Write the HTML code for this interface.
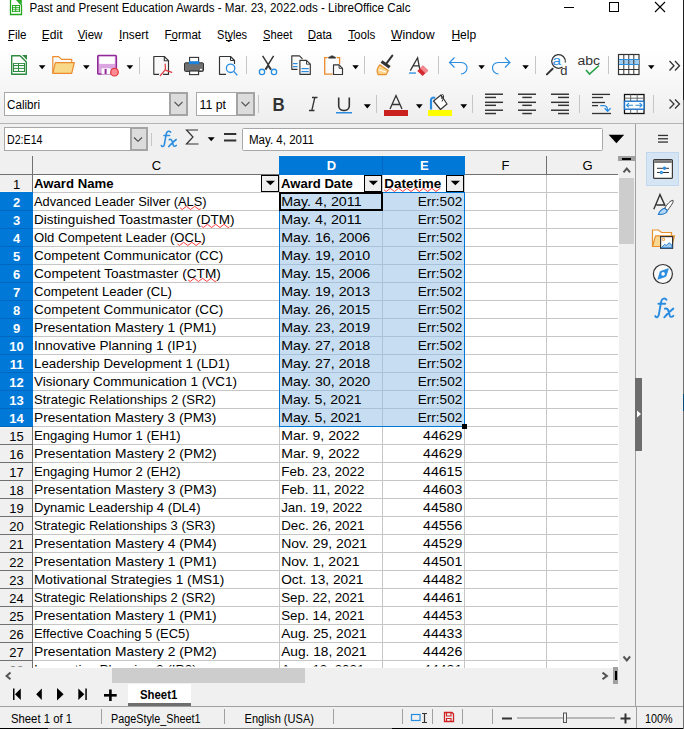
<!DOCTYPE html>
<html><head><meta charset="utf-8"><title>LibreOffice Calc</title>
<style>
html,body{margin:0;padding:0;width:684px;height:729px;overflow:hidden;background:#f0f0f0;}
svg{display:block;font-family:"Liberation Sans", sans-serif;}
</style></head><body>
<svg width="684" height="729" viewBox="0 0 684 729" shape-rendering="auto">
<rect x="0" y="0" width="684" height="729" fill="#f0f0f0"/>
<rect x="0" y="0" width="684" height="48" fill="#ffffff"/>
<defs><linearGradient id="tb" x1="0" y1="0" x2="0" y2="1"><stop offset="0" stop-color="#ffffff"/><stop offset="1" stop-color="#eeeeee"/></linearGradient></defs>
<rect x="0" y="48" width="684" height="75" fill="url(#tb)"/>
<rect x="0" y="123" width="684" height="1" fill="#b4b4b4"/>
<g id="titleicon"><path d="M10.5 -1 V14.5 H21.5 V5 L16 -1" fill="none" stroke="#22a61c" stroke-width="1.3"/><path d="M16.5 -1 L21.8 4.3 V-1 Z" fill="#22a61c"/><rect x="12" y="5" width="8" height="7" fill="#22a61c"/><rect x="13" y="6" width="2.2" height="1.2" fill="#fff"/><rect x="16.2" y="6" width="2.8" height="1.2" fill="#fff"/><rect x="13" y="8.2" width="2.2" height="1.2" fill="#fff"/><rect x="16.2" y="8.2" width="2.8" height="1.2" fill="#fff"/><rect x="13" y="10.2" width="2.2" height="1" fill="#fff"/><rect x="16.2" y="10.2" width="2.8" height="1" fill="#fff"/></g>
<text x="29.5" y="12" font-size="12" fill="#000" textLength="381" lengthAdjust="spacingAndGlyphs">Past and Present Education Awards - Mar. 23, 2022.ods - LibreOffice Calc</text>
<rect x="564" y="7" width="10" height="1" fill="#000"/>
<rect x="609.5" y="2.5" width="9" height="9" fill="none" stroke="#000" stroke-width="1"/>
<path d="M655 2 L665 12 M665 2 L655 12" stroke="#000" stroke-width="1.1"/>
<text x="7.8999999999999995" y="39" font-size="12" fill="#000" textLength="18.6" lengthAdjust="spacingAndGlyphs">File</text>
<text x="41.800000000000004" y="39" font-size="12" fill="#000" textLength="20.8" lengthAdjust="spacingAndGlyphs">Edit</text>
<text x="77.7" y="39" font-size="12" fill="#000" textLength="24.6" lengthAdjust="spacingAndGlyphs">View</text>
<text x="118.9" y="39" font-size="12" fill="#000" textLength="29.6" lengthAdjust="spacingAndGlyphs">Insert</text>
<text x="164.39999999999998" y="39" font-size="12" fill="#000" textLength="36.7" lengthAdjust="spacingAndGlyphs">Format</text>
<text x="217.1" y="39" font-size="12" fill="#000" textLength="30.0" lengthAdjust="spacingAndGlyphs">Styles</text>
<text x="263.09999999999997" y="39" font-size="12" fill="#000" textLength="29.2" lengthAdjust="spacingAndGlyphs">Sheet</text>
<text x="307.7" y="39" font-size="12" fill="#000" textLength="24.3" lengthAdjust="spacingAndGlyphs">Data</text>
<text x="348.2" y="39" font-size="12" fill="#000" textLength="27.1" lengthAdjust="spacingAndGlyphs">Tools</text>
<text x="390.9" y="39" font-size="12" fill="#000" textLength="43.6" lengthAdjust="spacingAndGlyphs">Window</text>
<text x="451.4" y="39" font-size="12" fill="#000" textLength="24.8" lengthAdjust="spacingAndGlyphs">Help</text>
<rect x="8" y="40" width="5" height="1" fill="#000"/>
<rect x="42" y="40" width="6" height="1" fill="#000"/>
<rect x="78" y="40" width="7" height="1" fill="#000"/>
<rect x="119" y="40" width="3" height="1" fill="#000"/>
<rect x="170" y="40" width="7" height="1" fill="#000"/>
<rect x="226" y="40" width="6" height="1" fill="#000"/>
<rect x="263" y="40" width="7" height="1" fill="#000"/>
<rect x="308" y="40" width="8" height="1" fill="#000"/>
<rect x="348" y="40" width="7" height="1" fill="#000"/>
<rect x="391" y="40" width="10" height="1" fill="#000"/>
<rect x="452" y="40" width="8" height="1" fill="#000"/>
<path d="M11.7 55.7 H20 L26.3 62 V74.3 H11.7 Z" fill="#fff" stroke="#2e8b40" stroke-width="1.4" stroke-linejoin="round"/>
<path d="M22 55 H27 V60 Z" fill="#2e8b40"/>
<rect x="13" y="63" width="12" height="9" fill="#2e8b40"/>
<rect x="14" y="63.9" width="4" height="1.1" fill="#fff"/><rect x="19" y="63.9" width="5" height="1.1" fill="#fff"/>
<rect x="14" y="66.1" width="4" height="1.8" fill="#fff"/><rect x="19" y="66.1" width="5" height="1.8" fill="#fff"/>
<rect x="14" y="68.9" width="4" height="2.0" fill="#fff"/><rect x="19" y="68.9" width="5" height="2.0" fill="#fff"/>
<path d="M38.8 65.2 H45.5 L42.15 69.3 Z" fill="#000"/>
<path d="M52.8 73.3 V56.6 H58.6 L61.6 59.4 H71.7 V62.6" fill="#fcfcfc" stroke="#ec8a2c" stroke-width="1.2" stroke-linejoin="round"/>
<path d="M52.8 73.3 L55.3 62.6 H74.3 L71.7 73.3 Z" fill="#f8d98a" stroke="#ec8a2c" stroke-width="1.2" stroke-linejoin="round"/>
<path d="M83 65.2 H89.7 L86.35 69.3 Z" fill="#000"/>
<rect x="97.75" y="55.5" width="18.6" height="18.6" rx="0.8" fill="#dba6df" stroke="#8f2a97" stroke-width="1.5"/>
<rect x="99.3" y="56.6" width="15.5" height="7.3" fill="#fff"/>
<rect x="101.6" y="68.4" width="9" height="6" fill="#fff"/><rect x="104.6" y="69" width="2" height="5" fill="#8f2a97"/>
<circle cx="114.5" cy="72.2" r="3.8" fill="#ff8a94" stroke="#e03a3a" stroke-width="1.2"/>
<path d="M126.5 65.2 H133.2 L129.85 69.3 Z" fill="#000"/>
<rect x="139" y="57" width="1" height="17" fill="#c6c6c6"/>
<path d="M153.8 56.5 H164.3 L168.5 60.7 V74.3 H153.8 Z" fill="#f9f9f9" stroke="#333" stroke-width="1.15" stroke-linejoin="round"/>
<path d="M164.3 56.5 V60.8 H168.5" fill="none" stroke="#333" stroke-width="1.1"/>
<rect x="159" y="73.5" width="4" height="1.6" fill="#fff"/>
<path d="M165.1 64.2 C165.4 66.5 165.8 68.5 165.2 70 L160.3 75.6 M165.2 70 C167.3 71 169.4 71.4 171.7 72.3" fill="none" stroke="#e23a3f" stroke-width="1.25" stroke-linecap="round"/>
<rect x="189.6" y="57.4" width="9" height="6" fill="#fff" stroke="#333" stroke-width="1.1"/>
<rect x="184.5" y="62.8" width="19" height="8.6" rx="1" fill="#707070" stroke="#333" stroke-width="1"/>
<rect x="189" y="61.2" width="10.2" height="3" fill="#1a80d8"/>
<rect x="189.6" y="71" width="9" height="3.6" fill="#fff" stroke="#333" stroke-width="1.1"/>
<rect x="200" y="68.9" width="2" height="1.3" fill="#fff"/>
<path d="M219.5 56.5 H230.5 L234.5 60.5 V64 M226 74.3 H219.5 V56.5" fill="#f9f9f9" stroke="#333" stroke-width="1.15" stroke-linejoin="round"/>
<path d="M230.5 56.5 V60.5 H234.5" fill="none" stroke="#333" stroke-width="1"/>
<circle cx="230.6" cy="68.3" r="4.2" fill="#fff" stroke="#2b8de0" stroke-width="1.3"/>
<path d="M233.7 71.4 L237.3 75.2" stroke="#2b8de0" stroke-width="1.3"/>
<rect x="246" y="56" width="1" height="18" fill="#c6c6c6"/>
<path d="M262.6 55.8 L268.2 64.6 L273.6 55.8" fill="none" stroke="#333" stroke-width="1.45" stroke-linejoin="miter"/>
<path d="M265.4 69.6 L268.2 65.4 L271 69.6" fill="none" stroke="#333" stroke-width="1.9"/>
<circle cx="262" cy="71.9" r="2.65" fill="#fff" stroke="#2b8de0" stroke-width="1.3"/>
<circle cx="274" cy="71.9" r="2.65" fill="#fff" stroke="#2b8de0" stroke-width="1.3"/>
<path d="M297.5 69.3 H291.8 V55.8 H299.4 L302.5 58.9" fill="#fafafa" stroke="#333" stroke-width="1.15" stroke-linejoin="round"/>
<rect x="293" y="63" width="4.6" height="1.2" fill="#2b8de0"/>
<rect x="293" y="66" width="4.6" height="1.2" fill="#2b8de0"/>
<path d="M299.9 60.4 H306.5 L310.3 64.2 V74.3 H299.9 Z" fill="#fafafa" stroke="#333" stroke-width="1.15" stroke-linejoin="round"/>
<path d="M306.5 60.4 V64.2 H310.3" fill="none" stroke="#333" stroke-width="0.9"/>
<rect x="301.4" y="68" width="7.4" height="1.2" fill="#2b8de0"/>
<rect x="301.4" y="71" width="7.4" height="1.2" fill="#2b8de0"/>
<path d="M327.5 57.6 H324.7 V74.1 H332.5 M336.8 57.6 H339.6 V64" fill="none" stroke="#ec8a2c" stroke-width="1.3"/>
<path d="M328.3 58.4 H335.8 V57.6 C335.8 56.6 334.8 56.4 333.8 56.4 C333.6 55.2 330.6 55.2 330.4 56.4 C329.4 56.4 328.3 56.6 328.3 57.6 Z" fill="#333"/>
<path d="M333.5 64.9 H339.1 L342.5 68.3 V74.5 H333.5 Z" fill="#fafafa" stroke="#333" stroke-width="1.15" stroke-linejoin="round"/>
<path d="M339.1 64.9 V68.3 H342.5" fill="none" stroke="#333" stroke-width="0.9"/>
<path d="M352.3 65.2 H358.8 L355.55 69.3 Z" fill="#000"/>
<rect x="364" y="56" width="1" height="18" fill="#c6c6c6"/>
<path d="M392.3 55.6 L386.3 63.6" stroke="#333" stroke-width="2" stroke-linecap="round"/>
<path d="M380.6 62.8 L388.8 68.6 L390.6 66 L382.4 60.3 Z" fill="#333"/>
<path d="M379.8 64.8 L388.2 70.6 L386 74.6 H378.2 C376.6 72 377 68 379.8 64.8 Z" fill="#fbd38b" stroke="#e8912c" stroke-width="1.2" stroke-linejoin="round"/>
<path d="M378.6 69.8 L386.6 72.2" stroke="#fff" stroke-width="1"/>
<path d="M410.3 70.6 L417.6 57.8 L420 70.6 M413.2 65.8 H419" fill="none" stroke="#333" stroke-width="1.3"/>
<rect x="409" y="72.4" width="7" height="1.3" fill="#2b8de0"/>
<path d="M417.3 71 L422.6 76 L428.2 70.6 L422.9 65.5 Z" fill="#d42a2f"/>
<path d="M420.1 68.2 L422.9 65.5 L428.2 70.6 L425.4 73.3 Z" fill="#f28a90"/>
<rect x="438" y="56" width="1" height="18" fill="#c6c6c6"/>
<path d="M449.5 62.5 H461 C470 62.5 468 74 461 74" fill="none" stroke="#2b8de0" stroke-width="1.15"/>
<path d="M454.5 57.5 L449.5 62.5 L454.5 67.5" fill="none" stroke="#2b8de0" stroke-width="1.15"/>
<path d="M478.3 65.2 H484.8 L481.55 69.3 Z" fill="#000"/>
<path d="M510 62.5 H498.5 C489.5 62.5 491.5 74 498.5 74" fill="none" stroke="#2b8de0" stroke-width="1.15"/>
<path d="M505 57.5 L510 62.5 L505 67.5" fill="none" stroke="#2b8de0" stroke-width="1.15"/>
<path d="M522.3 65.2 H528.8 L525.55 69.3 Z" fill="#000"/>
<rect x="535" y="56" width="1" height="18" fill="#c6c6c6"/>
<path d="M562.5 67 A6.8 6.8 0 1 1 565.3 62.5" fill="none" stroke="#333" stroke-width="1.2"/>
<path d="M546.9 74.4 L552.6 68.8" stroke="#333" stroke-width="2" stroke-linecap="round"/>
<text x="552.6" y="65.3" font-size="12.5" fill="#2b8de0" textLength="8.6" lengthAdjust="spacingAndGlyphs">a</text>
<text x="560.2" y="75" font-size="12.5" fill="#333" textLength="7.2" lengthAdjust="spacingAndGlyphs">d</text>
<text x="577.5" y="64.5" font-size="12.5" fill="#333" textLength="22.5" lengthAdjust="spacingAndGlyphs">abc</text>
<path d="M586 70 L589.5 74 L599 65.5" fill="none" stroke="#26a148" stroke-width="1.6"/>
<rect x="608" y="56" width="1" height="18" fill="#c6c6c6"/>
<rect x="618.5" y="54.5" width="20.5" height="20" fill="#fff" stroke="#333" stroke-width="1.2"/>
<rect x="619" y="59.5" width="20" height="5" fill="#9fcbef"/>
<path d="M619 59.5 H639 M619 64.5 H639 M619 69.5 H639 M623.8 54.5 V74.5 M628.8 54.5 V74.5 M633.8 54.5 V74.5" stroke="#333" stroke-width="1"/>
<path d="M619 59.5 H639 M619 64.5 H639" stroke="#2b8de0" stroke-width="1.2"/>
<path d="M648 65.2 H654.5 L651.25 69.3 Z" fill="#000"/>
<path d="M669.5 61 L674 65.7 L669.5 70.5 M675 61 L679.5 65.7 L675 70.5" fill="none" stroke="#333" stroke-width="1.3"/>
<rect x="4.5" y="92.5" width="183" height="23" fill="#fff" stroke="#a8a8a8" stroke-width="1"/>
<rect x="170" y="93" width="17" height="22" fill="#dcdcdc"/>
<path d="M169.5 93 V115" stroke="#a8a8a8" stroke-width="1"/>
<rect x="170" y="93" width="17" height="22" fill="none" stroke="#a4a4a4" stroke-width="2"/>
<path d="M174.5 102.0 L178.5 106.0 L182.5 102.0" fill="none" stroke="#555" stroke-width="1.1"/>
<text x="7" y="108.5" font-size="12.5" fill="#000" textLength="33" lengthAdjust="spacingAndGlyphs">Calibri</text>
<rect x="196.5" y="92.5" width="58" height="23" fill="#fff" stroke="#a8a8a8" stroke-width="1"/>
<rect x="237" y="93" width="17" height="22" fill="#dcdcdc"/>
<path d="M236.5 93 V115" stroke="#a8a8a8" stroke-width="1"/>
<rect x="237" y="93" width="17" height="22" fill="none" stroke="#a4a4a4" stroke-width="2"/>
<path d="M241.5 102.0 L245.5 106.0 L249.5 102.0" fill="none" stroke="#555" stroke-width="1.1"/>
<text x="199.5" y="108.5" font-size="12.5" fill="#000" textLength="26.5" lengthAdjust="spacingAndGlyphs">11 pt</text>
<rect x="258" y="95" width="1" height="18" fill="#c6c6c6"/>
<text x="272.6" y="110.7" font-size="18.5" font-weight="bold" fill="#333" textLength="12.2" lengthAdjust="spacingAndGlyphs">B</text>
<path d="M312 97.5 H317.5 M309 110.5 H314.5 M314.8 97.5 L311.8 110.5" stroke="#333" stroke-width="1.3" fill="none"/>
<path d="M338.7 97.5 V106 C338.7 112 349.3 112 349.3 106 V97.5" fill="none" stroke="#333" stroke-width="1.6"/>
<rect x="336" y="112" width="16" height="1.5" fill="#2b8de0"/>
<path d="M363.8 104.3 H370.8 L367.3 108.5 Z" fill="#000"/>
<rect x="376" y="95" width="1" height="18" fill="#c6c6c6"/>
<path d="M390 109 L396 95.5 L402 109 M392.2 104.5 H399.8" fill="none" stroke="#333" stroke-width="1.3"/>
<rect x="384" y="110" width="24" height="6" fill="#c9211e"/>
<path d="M416 104.3 H422.7 L419.35 108.5 Z" fill="#000"/>
<path d="M433.5 101 L441 95 L447 104 L440.5 109.5 Z" fill="#fff" stroke="#333" stroke-width="1.2" stroke-linejoin="round"/>
<path d="M431 109.5 V100 C431 98 433 97 435 98" fill="none" stroke="#2b8de0" stroke-width="2.2"/>
<path d="M442 101.5 C444 98 444 94.5 442.5 94.5 C441 94.5 441 97 442 99" fill="none" stroke="#333" stroke-width="1"/>
<rect x="428" y="110" width="24" height="6" fill="#ffff00"/>
<path d="M460.4 104.3 H467.09999999999997 L463.75 108.5 Z" fill="#000"/>
<rect x="472" y="95" width="1" height="18" fill="#c6c6c6"/>
<rect x="485" y="93.5" width="18" height="1.45" fill="#333"/>
<rect x="485" y="96.7" width="11" height="1.45" fill="#333"/>
<rect x="485" y="101.6" width="18" height="1.45" fill="#333"/>
<rect x="485" y="104.6" width="11" height="1.45" fill="#333"/>
<rect x="485" y="109.5" width="18" height="1.45" fill="#333"/>
<rect x="485" y="112.8" width="11" height="1.45" fill="#333"/>
<rect x="518" y="93.5" width="18" height="1.45" fill="#333"/>
<rect x="522.3" y="96.7" width="9.5" height="1.45" fill="#333"/>
<rect x="518" y="101.6" width="18" height="1.45" fill="#333"/>
<rect x="522.3" y="104.6" width="9.5" height="1.45" fill="#333"/>
<rect x="518" y="109.5" width="18" height="1.45" fill="#333"/>
<rect x="522.3" y="112.8" width="9.5" height="1.45" fill="#333"/>
<rect x="551" y="93.5" width="18" height="1.45" fill="#333"/>
<rect x="558" y="96.7" width="11" height="1.45" fill="#333"/>
<rect x="551" y="101.6" width="18" height="1.45" fill="#333"/>
<rect x="558" y="104.6" width="11" height="1.45" fill="#333"/>
<rect x="551" y="109.5" width="18" height="1.45" fill="#333"/>
<rect x="558" y="112.8" width="11" height="1.45" fill="#333"/>
<rect x="579" y="95" width="1" height="18" fill="#c6c6c6"/>
<rect x="592" y="93.75" width="18" height="1.3" fill="#333"/>
<rect x="592" y="96.85" width="11" height="1.3" fill="#333"/>
<rect x="592" y="101.85" width="13" height="1.3" fill="#333"/>
<rect x="592" y="104.94999999999999" width="6" height="1.3" fill="#333"/>
<rect x="592" y="112.85" width="19" height="1.3" fill="#333"/>
<path d="M600.3 105.6 H604 C606.5 105.6 607.6 107.5 607.6 111" fill="none" stroke="#2b8de0" stroke-width="1.3"/>
<path d="M604.6 108.3 L607.6 111.3 L610.6 108.3" fill="none" stroke="#2b8de0" stroke-width="1.3"/>
<rect x="624.5" y="94.5" width="19.5" height="19" fill="#fff" stroke="#111" stroke-width="1.3"/>
<path d="M624.5 98.2 H644 M630.7 94.5 V101 M637.2 94.5 V101 M630.7 109 V113.5 M637.2 109 V113.5" stroke="#666" stroke-width="1"/>
<rect x="624.5" y="101.2" width="19.5" height="8" fill="#fff" stroke="#1a73c8" stroke-width="1.4"/>
<path d="M626.5 105.2 H633 M629 103 L626.6 105.2 L629 107.4 M635.5 105.2 H642 M639.6 103 L642 105.2 L639.6 107.4" fill="none" stroke="#2b8de0" stroke-width="1.1"/>
<rect x="653" y="95" width="1" height="18" fill="#c6c6c6"/>
<path d="M669.5 99.5 L674 104 L669.5 108.5 M675 99.5 L679.5 104 L675 108.5" fill="none" stroke="#333" stroke-width="1.3"/>
<rect x="4.5" y="127.5" width="143" height="23" fill="#fff" stroke="#a8a8a8" stroke-width="1"/>
<rect x="130.5" y="127.5" width="17" height="23" fill="#dcdcdc" stroke="#a8a8a8" stroke-width="1"/>
<rect x="131" y="128" width="16" height="22" fill="none" stroke="#a4a4a4" stroke-width="2"/>
<path d="M134 137.5 L138 141.3 L142 137.5" fill="none" stroke="#444" stroke-width="1.1"/>
<text x="7" y="144" font-size="12.5" fill="#000" textLength="35.5" lengthAdjust="spacingAndGlyphs">D2:E14</text>
<rect x="151" y="133" width="1" height="13" fill="#c6c6c6"/>
<path d="M170.6 132.2 C169.6 130.6 166.8 130.8 166.2 134 L164.3 144.6 C163.8 147 162 147 161.4 145.6 M164 135.5 H169.6 M169.3 139.6 C170.8 139 171.8 139.8 172.2 141.5 L173.3 145.2 C173.8 146.6 175.2 146.6 176.2 145.4 M176.2 139.5 C173.5 141.5 171 144 168.8 146.6" fill="none" stroke="#2b8de0" stroke-width="1.6" stroke-linecap="round"/>
<path d="M198 130 H186.5 L193 137 L186.5 144 H198.5" fill="none" stroke="#333" stroke-width="1.2"/>
<path d="M207.7 137.2 H214.7 L211.2 141.29999999999998 Z" fill="#000"/>
<rect x="224" y="133" width="12.3" height="2" fill="#333"/>
<rect x="224" y="139.5" width="12.3" height="2" fill="#333"/>
<rect x="242.5" y="128.5" width="360" height="22" rx="1" fill="#fff" stroke="#a8a8a8" stroke-width="1"/>
<text x="249" y="143.6" font-size="12.5" fill="#000" textLength="65" lengthAdjust="spacingAndGlyphs">May. 4, 2011</text>
<rect x="603" y="124" width="32" height="31" fill="#f0f0f0"/>
<path d="M608.6 134.7 H624.2 L616.4 143.3 Z" fill="#000"/>
<rect x="33" y="175" width="586" height="493" fill="#fff"/>
<rect x="0" y="156" width="619" height="18" fill="#f0f0f0"/>
<rect x="0" y="175" width="32" height="493" fill="#f0f0f0"/>
<rect x="279" y="156" width="186" height="19" fill="#0078d7"/>
<rect x="0" y="192" width="33" height="235" fill="#0078d7"/>
<rect x="0" y="191" width="33" height="1" fill="#fbf7f0"/>
<rect x="0" y="427" width="33" height="1" fill="#fbf7f0"/>
<rect x="279" y="155" width="186" height="1" fill="#fbf7f0"/>
<rect x="382" y="156" width="1" height="19" fill="#0067c0"/>
<rect x="32" y="156" width="1" height="36" fill="#707070"/>
<rect x="32" y="427" width="1" height="241" fill="#707070"/>
<rect x="0" y="174" width="279" height="1" fill="#707070"/>
<rect x="465" y="174" width="153" height="1" fill="#707070"/>
<rect x="546" y="156" width="1" height="18" fill="#707070"/>
<text x="156.5" y="170" font-size="13" text-anchor="middle" fill="#000">C</text>
<text x="331.4" y="170" font-size="13" font-weight="bold" text-anchor="middle" fill="#fff">D</text>
<text x="424.4" y="170" font-size="13" font-weight="bold" text-anchor="middle" fill="#fff">E</text>
<text x="505.5" y="170" font-size="13" text-anchor="middle" fill="#000">F</text>
<text x="587.5" y="170" font-size="13" text-anchor="middle" fill="#000">G</text>
<rect x="280" y="193" width="184" height="233" fill="#c7def2"/>
<rect x="33" y="192" width="585" height="1" fill="#c6c6c6"/>
<rect x="33" y="210" width="246" height="1" fill="#c6c6c6"/>
<rect x="279" y="210" width="185" height="1" fill="#a9c2d9"/>
<rect x="465" y="210" width="153" height="1" fill="#c6c6c6"/>
<rect x="0" y="210" width="33" height="1" fill="#0067c0"/>
<rect x="33" y="228" width="246" height="1" fill="#c6c6c6"/>
<rect x="279" y="228" width="185" height="1" fill="#a9c2d9"/>
<rect x="465" y="228" width="153" height="1" fill="#c6c6c6"/>
<rect x="0" y="228" width="33" height="1" fill="#0067c0"/>
<rect x="33" y="246" width="246" height="1" fill="#c6c6c6"/>
<rect x="279" y="246" width="185" height="1" fill="#a9c2d9"/>
<rect x="465" y="246" width="153" height="1" fill="#c6c6c6"/>
<rect x="0" y="246" width="33" height="1" fill="#0067c0"/>
<rect x="33" y="264" width="246" height="1" fill="#c6c6c6"/>
<rect x="279" y="264" width="185" height="1" fill="#a9c2d9"/>
<rect x="465" y="264" width="153" height="1" fill="#c6c6c6"/>
<rect x="0" y="264" width="33" height="1" fill="#0067c0"/>
<rect x="33" y="282" width="246" height="1" fill="#c6c6c6"/>
<rect x="279" y="282" width="185" height="1" fill="#a9c2d9"/>
<rect x="465" y="282" width="153" height="1" fill="#c6c6c6"/>
<rect x="0" y="282" width="33" height="1" fill="#0067c0"/>
<rect x="33" y="300" width="246" height="1" fill="#c6c6c6"/>
<rect x="279" y="300" width="185" height="1" fill="#a9c2d9"/>
<rect x="465" y="300" width="153" height="1" fill="#c6c6c6"/>
<rect x="0" y="300" width="33" height="1" fill="#0067c0"/>
<rect x="33" y="318" width="246" height="1" fill="#c6c6c6"/>
<rect x="279" y="318" width="185" height="1" fill="#a9c2d9"/>
<rect x="465" y="318" width="153" height="1" fill="#c6c6c6"/>
<rect x="0" y="318" width="33" height="1" fill="#0067c0"/>
<rect x="33" y="336" width="246" height="1" fill="#c6c6c6"/>
<rect x="279" y="336" width="185" height="1" fill="#a9c2d9"/>
<rect x="465" y="336" width="153" height="1" fill="#c6c6c6"/>
<rect x="0" y="336" width="33" height="1" fill="#0067c0"/>
<rect x="33" y="354" width="246" height="1" fill="#c6c6c6"/>
<rect x="279" y="354" width="185" height="1" fill="#a9c2d9"/>
<rect x="465" y="354" width="153" height="1" fill="#c6c6c6"/>
<rect x="0" y="354" width="33" height="1" fill="#0067c0"/>
<rect x="33" y="372" width="246" height="1" fill="#c6c6c6"/>
<rect x="279" y="372" width="185" height="1" fill="#a9c2d9"/>
<rect x="465" y="372" width="153" height="1" fill="#c6c6c6"/>
<rect x="0" y="372" width="33" height="1" fill="#0067c0"/>
<rect x="33" y="390" width="246" height="1" fill="#c6c6c6"/>
<rect x="279" y="390" width="185" height="1" fill="#a9c2d9"/>
<rect x="465" y="390" width="153" height="1" fill="#c6c6c6"/>
<rect x="0" y="390" width="33" height="1" fill="#0067c0"/>
<rect x="33" y="408" width="246" height="1" fill="#c6c6c6"/>
<rect x="279" y="408" width="185" height="1" fill="#a9c2d9"/>
<rect x="465" y="408" width="153" height="1" fill="#c6c6c6"/>
<rect x="0" y="408" width="33" height="1" fill="#0067c0"/>
<rect x="33" y="426" width="585" height="1" fill="#c6c6c6"/>
<rect x="0" y="426" width="33" height="1" fill="#0067c0"/>
<rect x="33" y="444" width="585" height="1" fill="#c6c6c6"/>
<rect x="0" y="444" width="32" height="1" fill="#707070"/>
<rect x="33" y="462" width="585" height="1" fill="#c6c6c6"/>
<rect x="0" y="462" width="32" height="1" fill="#707070"/>
<rect x="33" y="480" width="585" height="1" fill="#c6c6c6"/>
<rect x="0" y="480" width="32" height="1" fill="#707070"/>
<rect x="33" y="498" width="585" height="1" fill="#c6c6c6"/>
<rect x="0" y="498" width="32" height="1" fill="#707070"/>
<rect x="33" y="516" width="585" height="1" fill="#c6c6c6"/>
<rect x="0" y="516" width="32" height="1" fill="#707070"/>
<rect x="33" y="534" width="585" height="1" fill="#c6c6c6"/>
<rect x="0" y="534" width="32" height="1" fill="#707070"/>
<rect x="33" y="552" width="585" height="1" fill="#c6c6c6"/>
<rect x="0" y="552" width="32" height="1" fill="#707070"/>
<rect x="33" y="570" width="585" height="1" fill="#c6c6c6"/>
<rect x="0" y="570" width="32" height="1" fill="#707070"/>
<rect x="33" y="588" width="585" height="1" fill="#c6c6c6"/>
<rect x="0" y="588" width="32" height="1" fill="#707070"/>
<rect x="33" y="606" width="585" height="1" fill="#c6c6c6"/>
<rect x="0" y="606" width="32" height="1" fill="#707070"/>
<rect x="33" y="624" width="585" height="1" fill="#c6c6c6"/>
<rect x="0" y="624" width="32" height="1" fill="#707070"/>
<rect x="33" y="642" width="585" height="1" fill="#c6c6c6"/>
<rect x="0" y="642" width="32" height="1" fill="#707070"/>
<rect x="33" y="660" width="585" height="1" fill="#c6c6c6"/>
<rect x="0" y="660" width="32" height="1" fill="#707070"/>
<rect x="279" y="175" width="1" height="493" fill="#c6c6c6"/>
<rect x="382" y="175" width="1" height="493" fill="#c6c6c6"/>
<rect x="464" y="175" width="1" height="493" fill="#c6c6c6"/>
<rect x="546" y="175" width="1" height="493" fill="#c6c6c6"/>
<rect x="382" y="193" width="1" height="233" fill="#a9c2d9"/>
<rect x="279.5" y="192.5" width="185" height="234" fill="none" stroke="#0078d7" stroke-width="1"/>
<rect x="280" y="193" width="102" height="17" fill="none" stroke="#000" stroke-width="2"/>
<rect x="462" y="424" width="5" height="5" fill="#000"/>
<text x="34" y="187.5" font-size="13.5" font-weight="bold" fill="#000" textLength="79.5" lengthAdjust="spacingAndGlyphs">Award Name</text>
<text x="281" y="187.5" font-size="13.5" font-weight="bold" fill="#000" textLength="71.8" lengthAdjust="spacingAndGlyphs">Award Date</text>
<text x="384.2" y="187.5" font-size="13.5" font-weight="bold" fill="#000" textLength="57" lengthAdjust="spacingAndGlyphs">Datetime</text>
<rect x="261.5" y="175.5" width="17" height="16" fill="#efefef" stroke="#000" stroke-width="1"/>
<path d="M265.7 180.7 H275 L270.35 185.2 Z" fill="#000"/>
<rect x="364.5" y="175.5" width="17" height="16" fill="#efefef" stroke="#000" stroke-width="1"/>
<path d="M368.7 180.7 H378 L373.35 185.2 Z" fill="#000"/>
<rect x="446.5" y="175.5" width="17" height="16" fill="#efefef" stroke="#000" stroke-width="1"/>
<path d="M450.7 180.7 H460 L455.35 185.2 Z" fill="#000"/>
<g clip-path="url(#gridclip)">
<defs><clipPath id="gridclip"><rect x="0" y="0" width="684" height="666.5"/></clipPath></defs>
<text x="34" y="206" font-size="13.5" fill="#000" textLength="172.6" lengthAdjust="spacingAndGlyphs">Advanced Leader Silver (ALS)</text>
<text x="281.2" y="206" font-size="13.5" fill="#000" textLength="80.4" lengthAdjust="spacingAndGlyphs">May. 4, 2011</text>
<text x="417.7" y="206" font-size="13.5" fill="#000" textLength="44.6" lengthAdjust="spacingAndGlyphs">Err:502</text>
<text x="16.5" y="207" font-size="13" font-weight="bold" text-anchor="middle" fill="#fff">2</text>
<text x="34" y="224" font-size="13.5" fill="#000" textLength="200.6" lengthAdjust="spacingAndGlyphs">Distinguished Toastmaster (DTM)</text>
<text x="281.2" y="224" font-size="13.5" fill="#000" textLength="80.4" lengthAdjust="spacingAndGlyphs">May. 4, 2011</text>
<text x="417.7" y="224" font-size="13.5" fill="#000" textLength="44.6" lengthAdjust="spacingAndGlyphs">Err:502</text>
<text x="16.5" y="225" font-size="13" font-weight="bold" text-anchor="middle" fill="#fff">3</text>
<text x="34" y="242" font-size="13.5" fill="#000" textLength="171.6" lengthAdjust="spacingAndGlyphs">Old Competent Leader (OCL)</text>
<text x="281.2" y="242" font-size="13.5" fill="#000" textLength="89.1" lengthAdjust="spacingAndGlyphs">May. 16, 2006</text>
<text x="417.7" y="242" font-size="13.5" fill="#000" textLength="44.6" lengthAdjust="spacingAndGlyphs">Err:502</text>
<text x="16.5" y="243" font-size="13" font-weight="bold" text-anchor="middle" fill="#fff">4</text>
<text x="34" y="260" font-size="13.5" fill="#000" textLength="189.3" lengthAdjust="spacingAndGlyphs">Competent Communicator (CC)</text>
<text x="281.2" y="260" font-size="13.5" fill="#000" textLength="89.1" lengthAdjust="spacingAndGlyphs">May. 19, 2010</text>
<text x="417.7" y="260" font-size="13.5" fill="#000" textLength="44.6" lengthAdjust="spacingAndGlyphs">Err:502</text>
<text x="16.5" y="261" font-size="13" font-weight="bold" text-anchor="middle" fill="#fff">5</text>
<text x="34" y="278" font-size="13.5" fill="#000" textLength="186.8" lengthAdjust="spacingAndGlyphs">Competent Toastmaster (CTM)</text>
<text x="281.2" y="278" font-size="13.5" fill="#000" textLength="89.1" lengthAdjust="spacingAndGlyphs">May. 15, 2006</text>
<text x="417.7" y="278" font-size="13.5" fill="#000" textLength="44.6" lengthAdjust="spacingAndGlyphs">Err:502</text>
<text x="16.5" y="279" font-size="13" font-weight="bold" text-anchor="middle" fill="#fff">6</text>
<text x="34" y="296" font-size="13.5" fill="#000" textLength="138.0" lengthAdjust="spacingAndGlyphs">Competent Leader (CL)</text>
<text x="281.2" y="296" font-size="13.5" fill="#000" textLength="89.1" lengthAdjust="spacingAndGlyphs">May. 19, 2013</text>
<text x="417.7" y="296" font-size="13.5" fill="#000" textLength="44.6" lengthAdjust="spacingAndGlyphs">Err:502</text>
<text x="16.5" y="297" font-size="13" font-weight="bold" text-anchor="middle" fill="#fff">7</text>
<text x="34" y="314" font-size="13.5" fill="#000" textLength="189.3" lengthAdjust="spacingAndGlyphs">Competent Communicator (CC)</text>
<text x="281.2" y="314" font-size="13.5" fill="#000" textLength="89.1" lengthAdjust="spacingAndGlyphs">May. 26, 2015</text>
<text x="417.7" y="314" font-size="13.5" fill="#000" textLength="44.6" lengthAdjust="spacingAndGlyphs">Err:502</text>
<text x="16.5" y="315" font-size="13" font-weight="bold" text-anchor="middle" fill="#fff">8</text>
<text x="34" y="332" font-size="13.5" fill="#000" textLength="182.3" lengthAdjust="spacingAndGlyphs">Presentation Mastery 1 (PM1)</text>
<text x="281.2" y="332" font-size="13.5" fill="#000" textLength="89.1" lengthAdjust="spacingAndGlyphs">May. 23, 2019</text>
<text x="417.7" y="332" font-size="13.5" fill="#000" textLength="44.6" lengthAdjust="spacingAndGlyphs">Err:502</text>
<text x="16.5" y="333" font-size="13" font-weight="bold" text-anchor="middle" fill="#fff">9</text>
<text x="34" y="350" font-size="13.5" fill="#000" textLength="162.7" lengthAdjust="spacingAndGlyphs">Innovative Planning 1 (IP1)</text>
<text x="281.2" y="350" font-size="13.5" fill="#000" textLength="89.1" lengthAdjust="spacingAndGlyphs">May. 27, 2018</text>
<text x="417.7" y="350" font-size="13.5" fill="#000" textLength="44.6" lengthAdjust="spacingAndGlyphs">Err:502</text>
<text x="16.5" y="351" font-size="13" font-weight="bold" text-anchor="middle" fill="#fff">10</text>
<text x="34" y="368" font-size="13.5" fill="#000" textLength="195.7" lengthAdjust="spacingAndGlyphs">Leadership Development 1 (LD1)</text>
<text x="281.2" y="368" font-size="13.5" fill="#000" textLength="89.1" lengthAdjust="spacingAndGlyphs">May. 27, 2018</text>
<text x="417.7" y="368" font-size="13.5" fill="#000" textLength="44.6" lengthAdjust="spacingAndGlyphs">Err:502</text>
<text x="16.5" y="369" font-size="13" font-weight="bold" text-anchor="middle" fill="#fff">11</text>
<text x="34" y="386" font-size="13.5" fill="#000" textLength="203.1" lengthAdjust="spacingAndGlyphs">Visionary Communication 1 (VC1)</text>
<text x="281.2" y="386" font-size="13.5" fill="#000" textLength="89.1" lengthAdjust="spacingAndGlyphs">May. 30, 2020</text>
<text x="417.7" y="386" font-size="13.5" fill="#000" textLength="44.6" lengthAdjust="spacingAndGlyphs">Err:502</text>
<text x="16.5" y="387" font-size="13" font-weight="bold" text-anchor="middle" fill="#fff">12</text>
<text x="34" y="404" font-size="13.5" fill="#000" textLength="181.9" lengthAdjust="spacingAndGlyphs">Strategic Relationships 2 (SR2)</text>
<text x="281.2" y="404" font-size="13.5" fill="#000" textLength="80.4" lengthAdjust="spacingAndGlyphs">May. 5, 2021</text>
<text x="417.7" y="404" font-size="13.5" fill="#000" textLength="44.6" lengthAdjust="spacingAndGlyphs">Err:502</text>
<text x="16.5" y="405" font-size="13" font-weight="bold" text-anchor="middle" fill="#fff">13</text>
<text x="34" y="422" font-size="13.5" fill="#000" textLength="182.3" lengthAdjust="spacingAndGlyphs">Presentation Mastery 3 (PM3)</text>
<text x="281.2" y="422" font-size="13.5" fill="#000" textLength="80.4" lengthAdjust="spacingAndGlyphs">May. 5, 2021</text>
<text x="417.7" y="422" font-size="13.5" fill="#000" textLength="44.6" lengthAdjust="spacingAndGlyphs">Err:502</text>
<text x="16.5" y="423" font-size="13" font-weight="bold" text-anchor="middle" fill="#fff">14</text>
<text x="34" y="440" font-size="13.5" fill="#000" textLength="146.5" lengthAdjust="spacingAndGlyphs">Engaging Humor 1 (EH1)</text>
<text x="281.2" y="440" font-size="13.5" fill="#000" textLength="78.3" lengthAdjust="spacingAndGlyphs">Mar. 9, 2022</text>
<text x="423.1" y="440" font-size="13.5" fill="#000" textLength="39.2" lengthAdjust="spacingAndGlyphs">44629</text>
<text x="16.5" y="441" font-size="13" text-anchor="middle" fill="#000">15</text>
<text x="34" y="458" font-size="13.5" fill="#000" textLength="182.7" lengthAdjust="spacingAndGlyphs">Presentation Mastery 2 (PM2)</text>
<text x="281.2" y="458" font-size="13.5" fill="#000" textLength="78.3" lengthAdjust="spacingAndGlyphs">Mar. 9, 2022</text>
<text x="423.1" y="458" font-size="13.5" fill="#000" textLength="39.2" lengthAdjust="spacingAndGlyphs">44629</text>
<text x="16.5" y="459" font-size="13" text-anchor="middle" fill="#000">16</text>
<text x="34" y="476" font-size="13.5" fill="#000" textLength="146.5" lengthAdjust="spacingAndGlyphs">Engaging Humor 2 (EH2)</text>
<text x="281.2" y="476" font-size="13.5" fill="#000" textLength="83.2" lengthAdjust="spacingAndGlyphs">Feb. 23, 2022</text>
<text x="423.1" y="476" font-size="13.5" fill="#000" textLength="39.2" lengthAdjust="spacingAndGlyphs">44615</text>
<text x="16.5" y="477" font-size="13" text-anchor="middle" fill="#000">17</text>
<text x="34" y="494" font-size="13.5" fill="#000" textLength="182.7" lengthAdjust="spacingAndGlyphs">Presentation Mastery 3 (PM3)</text>
<text x="281.2" y="494" font-size="13.5" fill="#000" textLength="83.2" lengthAdjust="spacingAndGlyphs">Feb. 11, 2022</text>
<text x="423.1" y="494" font-size="13.5" fill="#000" textLength="39.2" lengthAdjust="spacingAndGlyphs">44603</text>
<text x="16.5" y="495" font-size="13" text-anchor="middle" fill="#000">18</text>
<text x="34" y="512" font-size="13.5" fill="#000" textLength="166.5" lengthAdjust="spacingAndGlyphs">Dynamic Leadership 4 (DL4)</text>
<text x="281.2" y="512" font-size="13.5" fill="#000" textLength="80.9" lengthAdjust="spacingAndGlyphs">Jan. 19, 2022</text>
<text x="423.1" y="512" font-size="13.5" fill="#000" textLength="39.2" lengthAdjust="spacingAndGlyphs">44580</text>
<text x="16.5" y="513" font-size="13" text-anchor="middle" fill="#000">19</text>
<text x="34" y="530" font-size="13.5" fill="#000" textLength="181.4" lengthAdjust="spacingAndGlyphs">Strategic Relationships 3 (SR3)</text>
<text x="281.2" y="530" font-size="13.5" fill="#000" textLength="83.2" lengthAdjust="spacingAndGlyphs">Dec. 26, 2021</text>
<text x="423.1" y="530" font-size="13.5" fill="#000" textLength="39.2" lengthAdjust="spacingAndGlyphs">44556</text>
<text x="16.5" y="531" font-size="13" text-anchor="middle" fill="#000">20</text>
<text x="34" y="548" font-size="13.5" fill="#000" textLength="182.7" lengthAdjust="spacingAndGlyphs">Presentation Mastery 4 (PM4)</text>
<text x="281.2" y="548" font-size="13.5" fill="#000" textLength="85.8" lengthAdjust="spacingAndGlyphs">Nov. 29, 2021</text>
<text x="423.1" y="548" font-size="13.5" fill="#000" textLength="39.2" lengthAdjust="spacingAndGlyphs">44529</text>
<text x="16.5" y="549" font-size="13" text-anchor="middle" fill="#000">21</text>
<text x="34" y="566" font-size="13.5" fill="#000" textLength="182.7" lengthAdjust="spacingAndGlyphs">Presentation Mastery 1 (PM1)</text>
<text x="281.2" y="566" font-size="13.5" fill="#000" textLength="78.3" lengthAdjust="spacingAndGlyphs">Nov. 1, 2021</text>
<text x="423.1" y="566" font-size="13.5" fill="#000" textLength="39.2" lengthAdjust="spacingAndGlyphs">44501</text>
<text x="16.5" y="567" font-size="13" text-anchor="middle" fill="#000">22</text>
<text x="34" y="584" font-size="13.5" fill="#000" textLength="190.2" lengthAdjust="spacingAndGlyphs">Motivational Strategies 1 (MS1)</text>
<text x="281.2" y="584" font-size="13.5" fill="#000" textLength="82.2" lengthAdjust="spacingAndGlyphs">Oct. 13, 2021</text>
<text x="423.1" y="584" font-size="13.5" fill="#000" textLength="39.2" lengthAdjust="spacingAndGlyphs">44482</text>
<text x="16.5" y="585" font-size="13" text-anchor="middle" fill="#000">23</text>
<text x="34" y="602" font-size="13.5" fill="#000" textLength="181.4" lengthAdjust="spacingAndGlyphs">Strategic Relationships 2 (SR2)</text>
<text x="281.2" y="602" font-size="13.5" fill="#000" textLength="83.2" lengthAdjust="spacingAndGlyphs">Sep. 22, 2021</text>
<text x="423.1" y="602" font-size="13.5" fill="#000" textLength="39.2" lengthAdjust="spacingAndGlyphs">44461</text>
<text x="16.5" y="603" font-size="13" text-anchor="middle" fill="#000">24</text>
<text x="34" y="620" font-size="13.5" fill="#000" textLength="182.7" lengthAdjust="spacingAndGlyphs">Presentation Mastery 1 (PM1)</text>
<text x="281.2" y="620" font-size="13.5" fill="#000" textLength="83.2" lengthAdjust="spacingAndGlyphs">Sep. 14, 2021</text>
<text x="423.1" y="620" font-size="13.5" fill="#000" textLength="39.2" lengthAdjust="spacingAndGlyphs">44453</text>
<text x="16.5" y="621" font-size="13" text-anchor="middle" fill="#000">25</text>
<text x="34" y="638" font-size="13.5" fill="#000" textLength="155.5" lengthAdjust="spacingAndGlyphs">Effective Coaching 5 (EC5)</text>
<text x="281.2" y="638" font-size="13.5" fill="#000" textLength="85.4" lengthAdjust="spacingAndGlyphs">Aug. 25, 2021</text>
<text x="423.1" y="638" font-size="13.5" fill="#000" textLength="39.2" lengthAdjust="spacingAndGlyphs">44433</text>
<text x="16.5" y="639" font-size="13" text-anchor="middle" fill="#000">26</text>
<text x="34" y="656" font-size="13.5" fill="#000" textLength="182.7" lengthAdjust="spacingAndGlyphs">Presentation Mastery 2 (PM2)</text>
<text x="281.2" y="656" font-size="13.5" fill="#000" textLength="85.4" lengthAdjust="spacingAndGlyphs">Aug. 18, 2021</text>
<text x="423.1" y="656" font-size="13.5" fill="#000" textLength="39.2" lengthAdjust="spacingAndGlyphs">44426</text>
<text x="16.5" y="657" font-size="13" text-anchor="middle" fill="#000">27</text>
<text x="34" y="674" font-size="13.5" fill="#000" textLength="162.7" lengthAdjust="spacingAndGlyphs">Innovative Planning 2 (IP2)</text>
<text x="281.2" y="674" font-size="13.5" fill="#000" textLength="83.2" lengthAdjust="spacingAndGlyphs">Aug. 13, 2021</text>
<text x="423.1" y="674" font-size="13.5" fill="#000" textLength="39.2" lengthAdjust="spacingAndGlyphs">44421</text>
<text x="16.5" y="675" font-size="13" text-anchor="middle" fill="#000">28</text>
<text x="16.5" y="189" font-size="13" text-anchor="middle" fill="#000">1</text>
</g>
<path d="M180.20 207.90 L182.27 209.50 L186.42 206.30 L190.57 209.50 L194.72 206.30 L198.88 209.50 L200.80 208.76" fill="none" stroke="#ff3c3c" stroke-width="1" stroke-linejoin="miter"/>
<path d="M201.20 225.90 L203.27 227.50 L207.42 224.30 L211.57 227.50 L215.72 224.30 L219.88 227.50 L224.03 224.30 L228.18 227.50 L229.40 227.03" fill="none" stroke="#ff3c3c" stroke-width="1" stroke-linejoin="miter"/>
<path d="M177.40 243.90 L179.47 245.50 L183.62 242.30 L187.78 245.50 L191.93 242.30 L196.08 245.50 L200.23 242.30 L201.50 242.79" fill="none" stroke="#ff3c3c" stroke-width="1" stroke-linejoin="miter"/>
<path d="M188.10 279.90 L190.17 281.50 L194.32 278.30 L198.47 281.50 L202.62 278.30 L206.78 281.50 L210.93 278.30 L215.08 281.50 L216.30 281.03" fill="none" stroke="#ff3c3c" stroke-width="1" stroke-linejoin="miter"/>
<path d="M384.10 189.90 L386.18 191.50 L390.32 188.30 L394.47 191.50 L398.62 188.30 L402.77 191.50 L406.92 188.30 L411.07 191.50 L415.22 188.30 L419.37 191.50 L423.52 188.30 L427.67 191.50 L431.82 188.30 L435.97 191.50 L440.12 188.30 L440.40 188.41" fill="none" stroke="#ff3c3c" stroke-width="1" stroke-linejoin="miter"/>
<rect x="619" y="156" width="16" height="511" fill="#f0f0f0"/>
<rect x="618" y="156" width="17" height="5" fill="#a0a0a0"/>
<rect x="622" y="158" width="9" height="2" fill="#000"/>
<path d="M623.5 172.3 L626.8 168.5 L630.1 172.3" fill="none" stroke="#555" stroke-width="2"/>
<rect x="619" y="178" width="15" height="66" fill="#cdcdcd"/>
<path d="M623.5 656.5 L626.8 660.5 L630.1 656.5" fill="none" stroke="#555" stroke-width="2"/>
<rect x="0" y="668" width="619" height="16" fill="#f0f0f0"/>
<path d="M10.5 672.6 L6.6 675.9 L10.5 679.2" fill="none" stroke="#555" stroke-width="2"/>
<rect x="112" y="668" width="193" height="15" fill="#cdcdcd"/>
<path d="M602.5 672.6 L606.9 675.9 L602.5 679.2" fill="none" stroke="#555" stroke-width="2"/>
<rect x="613" y="667" width="5" height="17" fill="#a0a0a0"/>
<rect x="615" y="671" width="2" height="9" fill="#000"/>
<rect x="13" y="688.5" width="1.5" height="11.5" fill="#000"/>
<path d="M20.8 688.5 L15 694.3 L20.8 700 Z" fill="#000"/>
<path d="M41.8 688.5 L36.2 694.3 L41.8 700 Z" fill="#000"/>
<path d="M57 688 L63.6 694.3 L57 700.5 Z" fill="#000"/>
<path d="M78.3 688.5 L84.3 694.3 L78.3 700 Z" fill="#000"/>
<rect x="85.3" y="688.5" width="1.5" height="11.5" fill="#000"/>
<rect x="104" y="694" width="12.7" height="2.6" fill="#000"/>
<rect x="109.1" y="689.5" width="2.6" height="11.5" fill="#000"/>
<rect x="128" y="684" width="63" height="19" fill="#ffffff"/>
<rect x="128" y="703" width="63" height="3" fill="#6e6e6e"/>
<text x="140" y="698.6" font-size="12.5" font-weight="bold" fill="#000" textLength="37.3" lengthAdjust="spacingAndGlyphs">Sheet1</text>
<rect x="0" y="706" width="684" height="1" fill="#a0a0a0"/>
<rect x="0" y="707" width="684" height="21" fill="#f0f0f0"/>
<text x="11" y="722.5" font-size="12.5" fill="#000" textLength="61" lengthAdjust="spacingAndGlyphs">Sheet 1 of 1</text>
<rect x="101" y="709" width="1" height="15" fill="#a0a0a0"/>
<text x="111" y="722.5" font-size="12.5" fill="#000" textLength="89.5" lengthAdjust="spacingAndGlyphs">PageStyle_Sheet1</text>
<rect x="224" y="709" width="1" height="15" fill="#a0a0a0"/>
<rect x="333" y="709" width="1" height="15" fill="#a0a0a0"/>
<text x="244.5" y="722.5" font-size="12.5" fill="#000" textLength="69.5" lengthAdjust="spacingAndGlyphs">English (USA)</text>
<rect x="402" y="709" width="1" height="15" fill="#a0a0a0"/>
<rect x="432" y="709" width="1" height="15" fill="#a0a0a0"/>
<rect x="462" y="709" width="1" height="15" fill="#a0a0a0"/>
<rect x="492" y="709" width="1" height="15" fill="#a0a0a0"/>
<rect x="411.5" y="714.5" width="8.5" height="6" fill="none" stroke="#2b8de0" stroke-width="1.2"/>
<path d="M422 713.5 H427 M424.5 713.5 V722.5 M422 722.5 H427" stroke="#333" stroke-width="1.2"/>
<path d="M444.5 712.5 H452 L453.5 714 V721.5 H444.5 Z" fill="none" stroke="#d02020" stroke-width="1.3"/>
<path d="M446.5 712.5 V716 H451 V712.5 M446.5 722 V718.5 H451 V722" fill="none" stroke="#d02020" stroke-width="1.1"/>
<rect x="502" y="717.5" width="10" height="2" fill="#333"/>
<rect x="517" y="717.5" width="98" height="1" fill="#808080"/>
<rect x="563.5" y="713" width="3" height="9.5" fill="#f0f0f0" stroke="#555" stroke-width="1"/>
<rect x="620.5" y="717.5" width="10" height="2" fill="#333"/>
<rect x="624.5" y="713.5" width="2" height="10" fill="#333"/>
<rect x="636" y="707" width="1" height="21" fill="#a0a0a0"/>
<text x="645" y="722.5" font-size="12.5" fill="#000" textLength="27.5" lengthAdjust="spacingAndGlyphs">100%</text>
<rect x="0" y="728" width="48" height="1" fill="#000"/>
<rect x="48" y="728" width="344" height="1" fill="#7a7a7a"/>
<rect x="392" y="728" width="292" height="1" fill="#000"/>
<rect x="635" y="124" width="1" height="583" fill="#a0a0a0"/>
<rect x="658" y="134.8" width="10" height="1.3" fill="#333"/>
<rect x="658" y="138.1" width="10" height="1.3" fill="#333"/>
<rect x="658" y="141.4" width="10" height="1.3" fill="#333"/>
<rect x="646.5" y="152.5" width="32" height="33" fill="#d6e5f3" stroke="#c0d8ef" stroke-width="1"/>
<rect x="653.6" y="159.6" width="18.8" height="18.8" rx="1" fill="#fff" stroke="#3a3a3a" stroke-width="1.2"/>
<rect x="654.2" y="160.2" width="17.6" height="2.8" fill="#7a7a7a"/>
<rect x="657" y="167.8" width="12" height="1" fill="#333"/>
<rect x="657" y="172" width="12" height="1" fill="#333"/>
<circle cx="664.5" cy="168.3" r="1.7" fill="#2b8de0"/><circle cx="661.4" cy="172.5" r="1.7" fill="#2b8de0"/><circle cx="661.4" cy="172.5" r="0.6" fill="#8cc4f0"/>
<path d="M653.8 209.2 L660 194.6 L665.2 206 M656.5 205 H665" fill="none" stroke="#333" stroke-width="1.4"/>
<path d="M664.8 208.3 C667 204 670.5 200.5 673 200.3 C674 201.5 671 206 667.3 210.5 Z" fill="#fff" stroke="#333" stroke-width="0.9"/>
<path d="M664.8 208.3 L667.3 210.5 C667 213 664 214.6 658.4 214.5 C659.5 211.5 661.5 209 664.8 208.3 Z" fill="#b5d6f2" stroke="#1a73c8" stroke-width="1.1"/>
<path d="M652.5 246.5 V230 H658.5 L661.5 232.5 H671.5 V236" fill="#fff" stroke="#e8912c" stroke-width="1.2"/>
<path d="M652.5 246.5 L655.5 235.8 H674.5 L671.5 246.5 Z" fill="#fad892" stroke="#e8912c" stroke-width="1.2" stroke-linejoin="round"/>
<rect x="660.6" y="236.6" width="12" height="11.7" fill="#fff" stroke="#333" stroke-width="1.2"/>
<circle cx="663.5" cy="239.4" r="1.2" fill="none" stroke="#e8912c" stroke-width="1"/>
<path d="M661.2 247.8 L664.6 244.4 L666.3 245.4 L669.2 242.8 L672 245.3 V247.8 Z" fill="#9fcbef" stroke="#1a73c8" stroke-width="0.9"/>
<circle cx="662.9" cy="274" r="9.5" fill="#fafafa" stroke="#333" stroke-width="1.2"/>
<path d="M668.3 268.7 L665.9 276.4 L657.9 279.2 L660.3 271.5 Z" fill="#2b8de0" stroke="#2b8de0" stroke-width="0.8" stroke-linejoin="round"/>
<circle cx="663.1" cy="273.9" r="1.8" fill="#fff"/>
<g transform="translate(655 298) scale(1.22) translate(-161.2 -130.8)"><path d="M170.6 132.2 C169.6 130.6 166.8 130.8 166.2 134 L164.3 144.6 C163.8 147 162 147 161.4 145.6 M164 135.5 H169.6 M169.3 139.6 C170.8 139 171.8 139.8 172.2 141.5 L173.3 145.2 C173.8 146.6 175.2 146.6 176.2 145.4 M176.2 139.5 C173.5 141.5 171 144 168.8 146.6" fill="none" stroke="#2b8de0" stroke-width="1.6" stroke-linecap="round"/></g>
<rect x="635" y="378" width="7" height="73" fill="#6d6d6d"/>
<path d="M637 410.5 L641 414 L637 417.5 Z" fill="#fff"/>
<rect x="683" y="0" width="1" height="100" fill="#1e1e1e"/>
<rect x="683" y="100" width="1" height="629" fill="#707070"/>
<rect x="683" y="394" width="1" height="17" fill="#0a4a78"/>
</svg>
</body></html>
